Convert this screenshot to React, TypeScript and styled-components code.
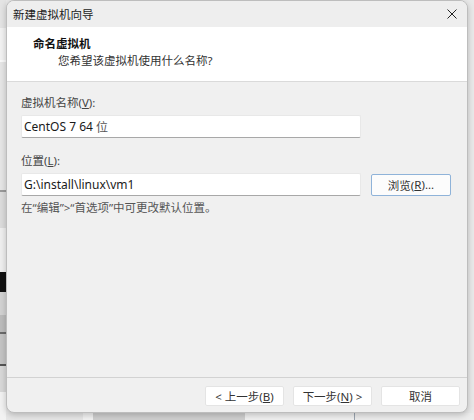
import React from "react";
import styled, { createGlobalStyle } from "styled-components";

const Global = createGlobalStyle`
  html, body { margin: 0; padding: 0; }
  body {
    width: 474px;
    height: 420px;
    overflow: hidden;
    font-family: "Noto Sans", "Noto Sans CJK SC", sans-serif;
  }
`;

const CJK = `"Noto Sans", "Noto Sans CJK SC", sans-serif`;

const Desktop = styled.div`
  width: 474px;
  height: 420px;
  box-sizing: border-box;
  display: flex;
  padding: 0 6px 7px 6px;
  background:
    linear-gradient(
        to bottom,
        #e4e4e4 0px, #e4e4e4 28px,
        #f2f2f2 28px, #f2f2f2 60px,
        #fafafa 60px, #fafafa 62px,
        #e6e6e6 62px, #e6e6e6 190px,
        #9a9a9a 190px, #9a9a9a 192px,
        #dcdcdc 192px, #dcdcdc 228px,
        #efefef 228px, #efefef 272px,
        #111 272px, #111 292px,
        #d2d2d2 292px, #d2d2d2 315px,
        #bcbcbc 315px, #bcbcbc 332px,
        #6a6a6a 332px, #6a6a6a 334px,
        #c4c4c4 334px, #c4c4c4 364px,
        #555 364px, #555 366px,
        #d8d8d8 366px, #d8d8d8 392px,
        #f2f2f2 392px, #f2f2f2 420px
      )
      left top / 6px 100% no-repeat,
    linear-gradient(
        to right,
        #e6e6e6 0px, #e6e6e6 83px,
        #f2f2f2 83px, #f2f2f2 93px,
        #cfcfcf 93px, #cfcfcf 245px,
        #f0f0f0 245px, #f0f0f0 354px,
        #9aa4b0 354px, #9aa4b0 355px,
        #ececec 355px, #ececec 474px
      )
      left bottom / 100% 7px no-repeat,
    #e9e9e9;
`;

const Window = styled.div`
  width: 462px;
  height: 413px;
  box-sizing: border-box;
  border: 1px solid #bdbdbd;
  border-radius: 8px;
  overflow: hidden;
  display: flex;
  flex-direction: column;
  background: #f0f0f0;
  box-shadow: 0 2px 6px rgba(0, 0, 0, 0.22);
`;

const TitleBar = styled.div`
  height: 26px;
  flex: none;
  display: flex;
  align-items: center;
  justify-content: space-between;
  padding: 0 10px 0 6px;
  background: #eeeeee;
`;

const Title = styled.span`
  font-family: ${CJK};
  font-size: 11.5px;
  color: #1b1b1b;
`;

const CloseIcon = styled.svg`
  width: 10px;
  height: 10px;
  display: block;
`;

const Header = styled.div`
  height: 55px;
  flex: none;
  box-sizing: border-box;
  background: #ffffff;
  border-bottom: 1px solid #dadada;
  display: flex;
  flex-direction: column;
  padding: 9px 0 0 26px;
`;

const HeaderTitle = styled.div`
  font-family: ${CJK};
  font-size: 11.5px;
  font-weight: 700;
  color: #111;
  line-height: 16px;
`;

const HeaderSub = styled.div`
  font-family: ${CJK};
  font-size: 11.5px;
  color: #333;
  line-height: 16px;
  padding: 1px 0 0 25px;
`;

const Body = styled.div`
  flex: 1;
  display: flex;
  flex-direction: column;
  padding: 13px 0 0 14px;
`;

const Label = styled.div<{ $top?: number }>`
  font-family: ${CJK};
  font-size: 11.5px;
  color: #444;
  line-height: 16px;
  margin-top: ${(p) => p.$top ?? 0}px;
`;

const Row = styled.div`
  display: flex;
  align-items: center;
  margin-top: 4px;
`;

const Field = styled.div`
  width: 340px;
  height: 23px;
  box-sizing: border-box;
  background: #ffffff;
  border: 1px solid #e8e8e8;
  border-bottom: 1px solid #a8a8a8;
  border-radius: 2px;
  display: flex;
  align-items: center;
  padding-left: 2px;
  font-family: "Segoe UI", "Noto Sans", "Noto Sans CJK SC", sans-serif;
  font-size: 12px;
  color: #1a1a1a;
`;

const FieldCJK = styled.span`
  font-family: "Noto Sans CJK SC", sans-serif;
  color: #555;
  margin-left: 3px;
`;

const BrowseButton = styled.div`
  margin-left: 10px;
  width: 80px;
  height: 22px;
  box-sizing: border-box;
  border: 1.5px solid #8fb3d9;
  border-radius: 2px;
  background: #fcfcfc;
  display: flex;
  align-items: center;
  justify-content: center;
  font-family: ${CJK};
  font-size: 11.5px;
  color: #333;
`;

const Hint = styled.div`
  font-family: ${CJK};
  font-size: 11.5px;
  color: #555;
  line-height: 16px;
  margin-top: 4px;
`;

const Footer = styled.div`
  height: 35px;
  flex: none;
  box-sizing: border-box;
  border-top: 1px solid #d2d2d2;
  display: flex;
  justify-content: flex-end;
  align-items: flex-start;
  gap: 9px;
  padding: 8px 7px 0 0;
`;

const Button = styled.div`
  width: 79px;
  height: 20px;
  box-sizing: border-box;
  background: #ffffff;
  border: 1px solid #e4e4e4;
  border-radius: 2px;
  display: flex;
  align-items: center;
  justify-content: center;
  font-family: ${CJK};
  font-size: 11.5px;
  color: #333;
`;

const U = styled.span`
  text-decoration: underline;
  text-underline-offset: 1px;
`;

export default function App() {
  return (
    <>
      <Global />
      <Desktop>
        <Window>
          <TitleBar>
            <Title>新建虚拟机向导</Title>
            <CloseIcon viewBox="0 0 10 10">
              <path d="M0.5 0.5 L9.5 9.5 M9.5 0.5 L0.5 9.5" stroke="#222" strokeWidth="1" fill="none" />
            </CloseIcon>
          </TitleBar>
          <Header>
            <HeaderTitle>命名虚拟机</HeaderTitle>
            <HeaderSub>您希望该虚拟机使用什么名称?</HeaderSub>
          </Header>
          <Body>
            <Label>
              虚拟机名称(<U>V</U>):
            </Label>
            <Row>
              <Field>
                CentOS 7 64<FieldCJK>位</FieldCJK>
              </Field>
            </Row>
            <Label $top={15}>
              位置(<U>L</U>):
            </Label>
            <Row>
              <Field>G:\install\linux\vm1</Field>
              <BrowseButton>
                浏览(<U>R</U>)...
              </BrowseButton>
            </Row>
            <Hint>在“编辑”&gt;“首选项”中可更改默认位置。</Hint>
          </Body>
          <Footer>
            <Button>
              &lt; 上一步(<U>B</U>)
            </Button>
            <Button>
              下一步(<U>N</U>) &gt;
            </Button>
            <Button>取消</Button>
          </Footer>
        </Window>
      </Desktop>
    </>
  );
}
